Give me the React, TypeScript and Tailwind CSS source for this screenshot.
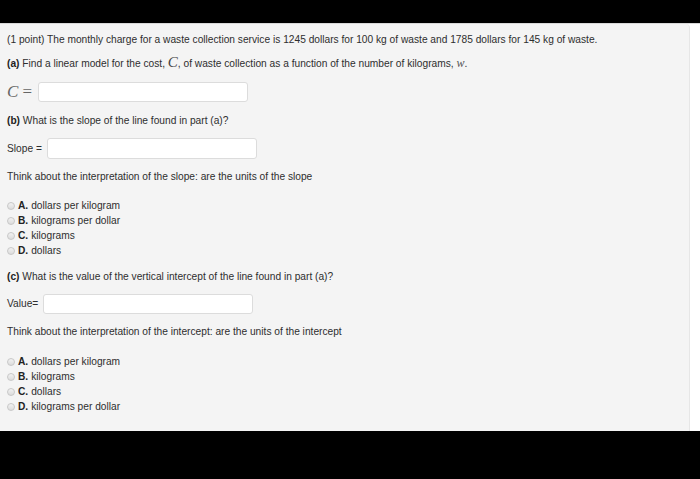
import React from "react";

const Radio = ({ letter, text }: { letter: string; text: string }) => (
  <div className="flex items-center h-[15px] leading-[15px]">
    <span className="w-[8px] h-[8px] rounded-full border border-[#c8c8c8] bg-gradient-to-b from-[#f2f2f2] to-[#dcdcdc] mr-[3px]" />
    <span className="font-bold text-[#222]">{letter}.</span>
    <span className="ml-[3px]">{text}</span>
  </div>
);

const Input = ({ w, h }: { w: string; h: string }) => (
  <div className={`${w} ${h} bg-white border border-[#dcdcdc] rounded-[3px]`} />
);

export default function App() {
  return (
    <div
      className="w-[700px] h-[479px] bg-black flex flex-col overflow-hidden"
      style={{ fontFamily: '"Liberation Sans", Arial, sans-serif' }}
    >
      <div className="h-[23px] bg-black shrink-0" />
      <div className="h-[1px] bg-[#d8d8d8] shrink-0" />
      <div className="flex h-[407px] shrink-0 bg-white">
        <div className="w-[690px] bg-[#f4f4f4] rounded-tr-[4px] border-r border-[#e6e6e6] pl-[7px] pt-[8px] text-[10.2px] text-[#2e2e2e]">
          <div className="h-[15px] leading-[15px]">
            (1 point) The monthly charge for a waste collection service is 1245 dollars for 100 kg of waste and 1785 dollars for 145 kg of waste.
          </div>
          <div className="h-[15px] leading-[15px] mt-[8px] whitespace-nowrap">
            <span className="font-bold text-[#222]">(a)</span> Find a linear model for the cost,{" "}
            <span className="italic text-[15px] text-[#444]" style={{ fontFamily: '"Liberation Serif", serif' }}>C</span>, of waste collection as a function of the number of kilograms,{" "}
            <span className="italic text-[12px] text-[#555]" style={{ fontFamily: '"Liberation Serif", serif' }}>w</span>.
          </div>
          <div className="flex items-center mt-[12px] h-[20px]">
            <span
              className="text-[17px] text-[#666] w-[31px] shrink-0 leading-[20px]"
              style={{ fontFamily: '"Liberation Serif", serif' }}
            >
              <span className="italic">C</span> =
            </span>
            <Input w="w-[210px]" h="h-[20px]" />
          </div>
          <div className="h-[15px] leading-[15px] mt-[11px]">
            <span className="font-bold text-[#222]">(b)</span> What is the slope of the line found in part (a)?
          </div>
          <div className="flex items-center mt-[10px] h-[21px]">
            <span className="w-[40px] shrink-0">Slope =</span>
            <Input w="w-[210px]" h="h-[21px]" />
          </div>
          <div className="h-[15px] leading-[15px] mt-[10px]">
            Think about the interpretation of the slope: are the units of the slope
          </div>
          <div className="mt-[14px]">
            <Radio letter="A" text="dollars per kilogram" />
            <Radio letter="B" text="kilograms per dollar" />
            <Radio letter="C" text="kilograms" />
            <Radio letter="D" text="dollars" />
          </div>
          <div className="h-[15px] leading-[15px] mt-[11px]">
            <span className="font-bold text-[#222]">(c)</span> What is the value of the vertical intercept of the line found in part (a)?
          </div>
          <div className="flex items-center mt-[10px] h-[20px]">
            <span className="w-[36px] shrink-0">Value=</span>
            <Input w="w-[210px]" h="h-[20px]" />
          </div>
          <div className="h-[15px] leading-[15px] mt-[10px]">
            Think about the interpretation of the intercept: are the units of the intercept
          </div>
          <div className="mt-[15px]">
            <Radio letter="A" text="dollars per kilogram" />
            <Radio letter="B" text="kilograms" />
            <Radio letter="C" text="dollars" />
            <Radio letter="D" text="kilograms per dollar" />
          </div>
        </div>
        <div className="flex-1 bg-white" />
      </div>
      <div className="flex-1 bg-black" />
    </div>
  );
}
